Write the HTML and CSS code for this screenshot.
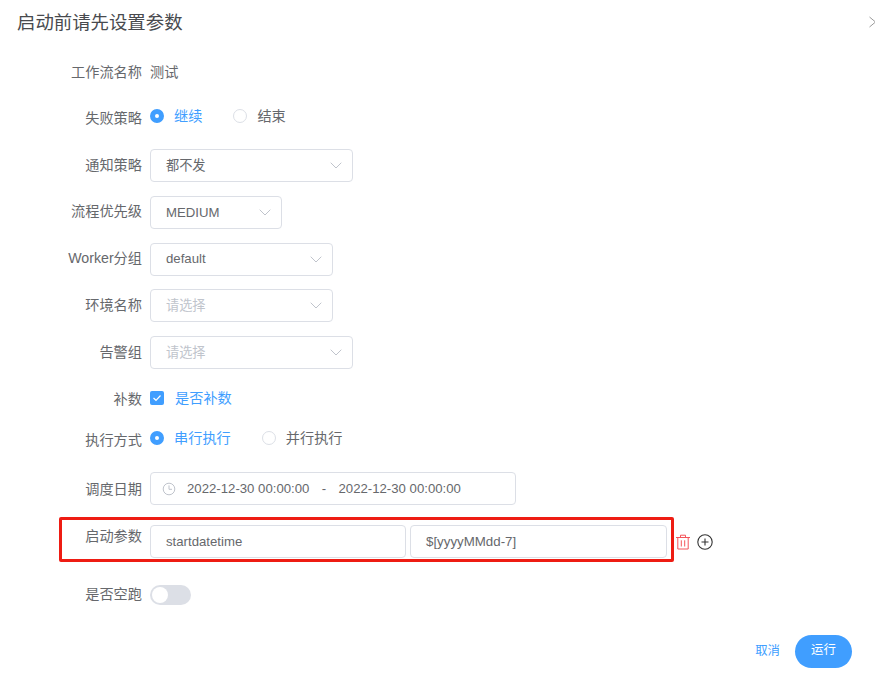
FILE: index.html
```html
<!DOCTYPE html>
<html lang="en">

<head>
  <meta charset="UTF-8">
  <title>启动前请先设置参数</title>
  <link rel="stylesheet" href="styles.css">
</head>

<body>
  <div class="dialog">
    <div class="header">
      <h1 class="title">启动前请先设置参数</h1>
      <svg class="close" width="10" height="12" viewBox="0 0 10 12"><path d="M1.5 1 7.5 6 1.5 11" fill="none" stroke="#9a9a9a" stroke-width="1"/></svg>
    </div>

    <div class="form">
      <div class="row row-name">
        <label class="label">工作流名称</label>
        <span class="value">测试</span>
      </div>

      <div class="row row-fail">
        <label class="label">失败策略</label>
        <span class="radio checked"></span><span class="option active">继续</span>
        <span class="radio"></span><span class="option">结束</span>
      </div>

      <div class="row row-select">
        <label class="label">通知策略</label>
        <div class="select w-203"><span class="cjk">都不发</span><svg class="arrow" width="12" height="7" viewBox="0 0 12 7"><path d="M.7.7 6 6 11.3.7" fill="none" stroke="#c0c4cc"/></svg></div>
      </div>

      <div class="row row-select">
        <label class="label">流程优先级</label>
        <div class="select w-132"><span>MEDIUM</span><svg class="arrow" width="12" height="7" viewBox="0 0 12 7"><path d="M.7.7 6 6 11.3.7" fill="none" stroke="#c0c4cc"/></svg></div>
      </div>

      <div class="row row-select">
        <label class="label">Worker分组</label>
        <div class="select w-183"><span class="latin">default</span><svg class="arrow" width="12" height="7" viewBox="0 0 12 7"><path d="M.7.7 6 6 11.3.7" fill="none" stroke="#c0c4cc"/></svg></div>
      </div>

      <div class="row row-select">
        <label class="label">环境名称</label>
        <div class="select w-183"><span class="cjk placeholder">请选择</span><svg class="arrow" width="12" height="7" viewBox="0 0 12 7"><path d="M.7.7 6 6 11.3.7" fill="none" stroke="#c0c4cc"/></svg></div>
      </div>

      <div class="row row-select">
        <label class="label">告警组</label>
        <div class="select w-203"><span class="cjk placeholder">请选择</span><svg class="arrow" width="12" height="7" viewBox="0 0 12 7"><path d="M.7.7 6 6 11.3.7" fill="none" stroke="#c0c4cc"/></svg></div>
      </div>

      <div class="row row-check">
        <label class="label">补数</label>
        <span class="checkbox"><svg width="10" height="8" viewBox="0 0 10 8"><path d="M1.5 4 4 6.3 8.5 1.5" fill="none" stroke="#fff" stroke-width="1.2"/></svg></span>
        <span class="option active">是否补数</span>
      </div>

      <div class="row row-mode">
        <label class="label">执行方式</label>
        <span class="radio checked"></span><span class="option active">串行执行</span>
        <span class="radio"></span><span class="option">并行执行</span>
      </div>

      <div class="row row-date">
        <label class="label">调度日期</label>
        <div class="date">
          <svg class="clock" width="14" height="14" viewBox="0 0 14 14"><circle cx="7" cy="7" r="5.8" fill="none" stroke="#c0c4cc"/><path d="M7 3.4V7.3H10" fill="none" stroke="#c0c4cc"/></svg>
          <span>2022-12-30 00:00:00</span>
          <span class="dash">-</span>
          <span>2022-12-30 00:00:00</span>
        </div>
      </div>

      <div class="row row-param">
        <label class="label">启动参数</label>
        <div class="input w-256">startdatetime</div>
        <div class="input w-257">$[yyyyMMdd-7]</div>
        <svg class="trash" width="16" height="16" viewBox="0 0 16 16"><path d="M1 3.5H15M5.5 3.5V1.2H10.5V3.5M2.8 3.5V15H13.2V3.5M6.3 6.3V12.5M9.7 6.3V12.5" fill="none" stroke="#f4555a" stroke-width="1"/></svg>
        <svg class="plus" width="16" height="16" viewBox="0 0 16 16"><circle cx="8" cy="8" r="7.2" fill="none" stroke="#333" stroke-width="1.1"/><path d="M8 4.5V11.5M4.5 8H11.5" fill="none" stroke="#333" stroke-width="1.1"/></svg>
        <div class="highlight"></div>
      </div>

      <div class="row row-switch">
        <label class="label">是否空跑</label>
        <span class="switch"><span class="knob"></span></span>
      </div>
    </div>

    <div class="footer">
      <span class="cancel">取消</span>
      <span class="submit">运行</span>
    </div>
  </div>
</body>

</html>
```

FILE: styles.css
```css
html, body {
  margin: 0;
  padding: 0;
  background: #fff;
}
body {
  font-family: "Liberation Sans", "Noto Sans CJK SC", sans-serif;
  font-size: 13.2px;
  color: #66686c;
}
.dialog {
  width: 875px;
  height: 679px;
  overflow: hidden;
}
.header {
  display: flex;
  justify-content: space-between;
  align-items: center;
  box-sizing: border-box;
  height: 47px;
  padding: 0 0 6px 17px;
}
.title {
  margin: 0;
  font-size: 18.4px;
  font-weight: 400;
  color: #484a4e;
}
.close {
  margin-right: -3px;
  margin-top: 3px;
}
.form {
  display: flex;
  flex-direction: column;
}
.row {
  position: relative;
  display: flex;
  align-items: center;
}
.label {
  width: 142px;
  margin-right: 8px;
  flex-shrink: 0;
  text-align: right;
  font-size: 14.2px;
  color: #66686c;
}
.row-name .label, .row-select .label, .row-switch .label {
  padding-bottom: 4px;
}
.row-date .label {
  padding-bottom: 2px;
}
.row-param .label {
  padding-bottom: 13px;
}
.value {
  font-size: 14.2px;
  padding-bottom: 4px;
}
.row-name {
  height: 20px;
  margin-top: 16px;
}
.row-fail {
  height: 20px;
  margin-top: 24px;
}
.row-select {
  height: 33px;
  margin-bottom: 13.75px;
}
.row-fail + .row-select {
  margin-top: 22px;
}
.row-check {
  height: 20px;
  margin-top: 5.25px;
}
.row-mode {
  height: 20px;
  margin-top: 21px;
}
.row-date {
  height: 33px;
  margin-top: 23px;
}
.row-param {
  height: 33px;
  margin-top: 20px;
}
.row-switch {
  height: 20px;
  margin-top: 27px;
}
.radio {
  width: 14px;
  height: 14px;
  border: 1px solid #dcdfe6;
  border-radius: 50%;
  box-sizing: border-box;
  margin-right: 10px;
  margin-top: -3px;
}
.radio.checked {
  border: 5px solid #409eff;
  background: #fff;
}
.option {
  font-size: 14.2px;
  margin-right: 31px;
  margin-top: -5px;
}
.option.active {
  color: #409eff;
}
.checkbox {
  display: flex;
  align-items: center;
  justify-content: center;
  width: 14px;
  height: 14px;
  border-radius: 2px;
  background: #409eff;
  margin-right: 11px;
}
.row-check .option {
  margin-top: -2px;
}
.select, .date, .input {
  display: flex;
  align-items: center;
  box-sizing: border-box;
  height: 33px;
  border: 1px solid #dcdfe6;
  border-radius: 4px;
  background: #fff;
}
.select {
  justify-content: space-between;
  padding: 0 10px 0 15px;
}
.cjk {
  padding-bottom: 3px;
}
.latin {
  padding-bottom: 1px;
}
.placeholder {
  color: #c0c4cc;
}
.w-203 {
  width: 203px;
}
.w-132 {
  width: 132px;
}
.w-183 {
  width: 183px;
}
.date {
  width: 366px;
  padding-left: 11px;
}
.clock {
  margin-right: 11px;
}
.dash {
  margin: 0 12.3px;
}
.input {
  padding-left: 15px;
}
.w-256 {
  width: 256px;
  margin-right: 4px;
}
.w-257 {
  width: 257px;
  padding-left: 15px;
  font-size: 13.3px;
}
.trash {
  margin-left: 8px;
}
.plus {
  margin-left: 6px;
}
.highlight {
  position: absolute;
  left: 59px;
  top: -8px;
  width: 615px;
  height: 45px;
  box-sizing: border-box;
  border: 3px solid #ee1c13;
  border-radius: 2px;
}
.switch {
  display: block;
  width: 41px;
  height: 20px;
  border-radius: 10px;
  background: #dcdfe6;
  position: relative;
}
.knob {
  position: absolute;
  left: 2px;
  top: 2px;
  width: 16px;
  height: 16px;
  border-radius: 50%;
  background: #fff;
}
.footer {
  display: flex;
  justify-content: flex-end;
  align-items: center;
  margin-top: 30px;
  padding-right: 23px;
}
.cancel {
  font-size: 12.4px;
  color: #409eff;
  margin-right: 15px;
  padding-bottom: 4px;
}
.submit {
  width: 57px;
  height: 33px;
  line-height: 31px;
  text-align: center;
  border-radius: 17px;
  background: #409eff;
  color: #fff;
  font-size: 12.4px;
}
```
